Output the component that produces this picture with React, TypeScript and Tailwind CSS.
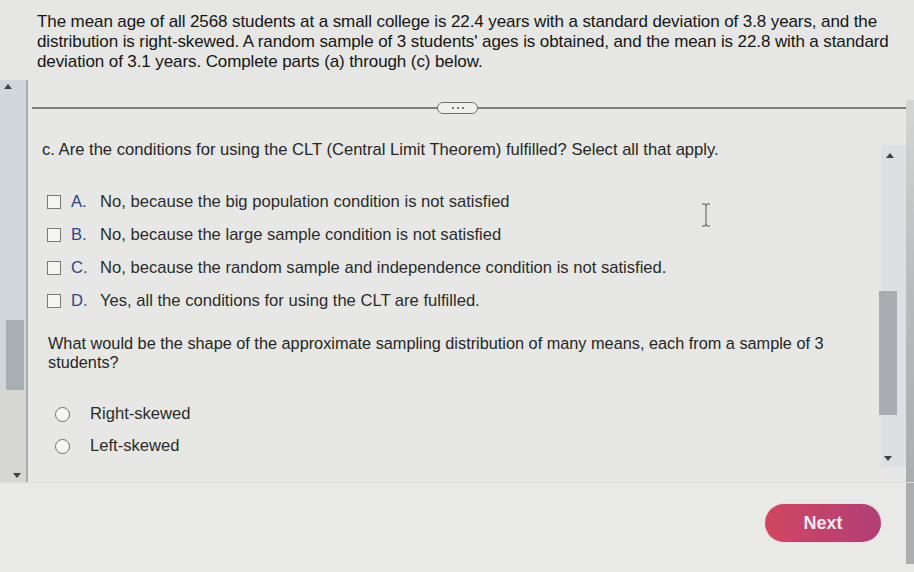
import React from "react";

function Checkbox({ letter, text }: { letter: string; text: string }) {
  return (
    <div className="flex items-center h-[33px] pl-[19px]">
      <div className="w-[14px] h-[14px] border border-[#7a7a7a] bg-[#f5f5f4]" />
      <span className="ml-[10px] w-[29px] text-[#2f4585]">{letter}</span>
      <span className="text-[#2b2b2b]">{text}</span>
    </div>
  );
}

function Radio({ text }: { text: string }) {
  return (
    <div className="flex items-center h-[32px] pl-[27px]">
      <div className="w-[15px] h-[15px] rounded-full border-[1.5px] border-[#6f6f6f] bg-[#f7f7f6]" />
      <span className="ml-[20px] text-[#2b2b2b]">{text}</span>
    </div>
  );
}

function UpTri() {
  return (
    <svg width="8" height="5" viewBox="0 0 8 5">
      <path d="M0 5 L4 0 L8 5 Z" fill="#3d4044" />
    </svg>
  );
}
function DownTri() {
  return (
    <svg width="8" height="5" viewBox="0 0 8 5">
      <path d="M0 0 L4 5 L8 0 Z" fill="#3d4044" />
    </svg>
  );
}

export default function App() {
  return (
    <div className="relative w-[914px] h-[572px] flex flex-col overflow-hidden bg-[#e7e8e5] font-['Liberation_Sans',Arial,sans-serif]">
      {/* Problem statement */}
      <div className="h-[80px] pl-[37px] pt-[12px] text-[17px] leading-[20px] tracking-[-0.1px] text-[#151515] bg-[#e6e7e4]">
        <span className="block whitespace-nowrap">
          The mean age of all 2568 students at a small college is 22.4 years with a standard deviation of 3.8 years, and the
        </span>
        <span className="block whitespace-nowrap">
          distribution is right-skewed. A random sample of 3 students' ages is obtained, and the mean is 22.8 with a standard
        </span>
        <span className="block whitespace-nowrap">
          deviation of 3.1 years. Complete parts (a) through (c) below.
        </span>
      </div>

      {/* Middle */}
      <div className="flex h-[402px]">
        {/* left scrollbar strip */}
        <div className="w-[28px] flex flex-col bg-[#d0d6da] border-r-2 border-[#a9aeb1]">
          <div className="h-[10px] flex items-start pl-[4px] pt-[4px]">
            <UpTri />
          </div>
          <div className="h-[230px]" />
          <div className="h-[70px] ml-[6px] w-[18px] bg-[#a7aeb4]" />
          <div className="flex-1 bg-[#d6d6d2]" />
          <div className="h-[14px] flex items-center justify-end pr-[5px] bg-[#d6d6d2]">
            <DownTri />
          </div>
        </div>

        {/* main */}
        <div className="flex-1 flex flex-col">
          <div className="mt-[22px] h-[12px] flex items-center">
            <div className="ml-[4px] w-[405px] h-[2px] bg-[#7d7d7d]" />
            <div className="w-[41px] h-[12px] rounded-full border border-[#707070] bg-[#efefee] flex items-center justify-center gap-[3px]">
              <div className="w-[2px] h-[2px] rounded-full bg-[#555]" />
              <div className="w-[2px] h-[2px] rounded-full bg-[#555]" />
              <div className="w-[2px] h-[2px] rounded-full bg-[#555]" />
            </div>
            <div className="flex-1 h-[2px] bg-[#7d7d7d]" />
          </div>

          <div className="flex flex-1">
            <div className="flex-1 flex flex-col text-[16.6px] leading-[20px]">
              <div className="mt-[26px] pl-[14px] text-[#262626] whitespace-nowrap">
                c. Are the conditions for using the CLT (Central Limit Theorem) fulfilled? Select all that apply.
              </div>
              <div className="flex flex-col mt-[25px]">
                <Checkbox letter="A." text="No, because the big population condition is not satisfied" />
                <Checkbox letter="B." text="No, because the large sample condition is not satisfied" />
                <Checkbox letter="C." text="No, because the random sample and independence condition is not satisfied." />
                <Checkbox letter="D." text="Yes, all the conditions for using the CLT are fulfilled." />
              </div>
              <div className="mt-[17px] pl-[20px] leading-[19px] text-[16.3px] text-[#262626]">
                <span className="block whitespace-nowrap">
                  What would be the shape of the approximate sampling distribution of many means, each from a sample of 3
                </span>
                <span className="block">students?</span>
              </div>
              <div className="mt-[26px] flex flex-col">
                <Radio text="Right-skewed" />
                <Radio text="Left-skewed" />
              </div>
            </div>

            {/* right scrollbar */}
            <div className="w-[25px] flex flex-col pt-[31px] pb-[15px]">
              <div className="flex-1 bg-[#dde0e3] flex flex-col">
                <div className="h-[20px] flex items-center pl-[5px]">
                  <UpTri />
                </div>
                <div className="h-[126px]" />
                <div className="h-[124px] w-[18px] -ml-[2px] bg-[#a9adb2]" />
                <div className="flex-1" />
                <div className="h-[18px] flex items-center pl-[3px]">
                  <DownTri />
                </div>
              </div>
            </div>
          </div>
        </div>

        {/* far right strip */}
        <div className="w-[8px] mt-[20px] bg-gradient-to-b from-[#d4d5d5] via-[#b9babb] to-[#acadae]" />
      </div>

      {/* bottom bar */}
      <div className="flex-1 flex border-t border-[#dcdedc] bg-[#e9eae8]">
        <div className="flex-1 flex justify-end items-start pt-[21px] pr-[25px]">
          <button className="w-[116px] h-[38px] rounded-full bg-gradient-to-r from-[#d04660] to-[#b13e76] text-[#f6eaf0] font-bold text-[18px] shadow-[0_0_0_1px_#f3d9e2]">
            Next
          </button>
        </div>
        <div className="w-[8px] mb-[8px] bg-[#acadae]" />
      </div>

      {/* mouse text cursor overlay */}
      <svg width="12" height="24" viewBox="0 0 12 24" className="absolute left-[700px] top-[203px]">
        <path d="M2 1 H5 Q6 1 6 3 V21 Q6 23 5 23 H2 M10 1 H7 Q6 1 6 3 M6 21 Q6 23 7 23 H10" fill="none" stroke="#555" strokeWidth="1" />
      </svg>
    </div>
  );
}
